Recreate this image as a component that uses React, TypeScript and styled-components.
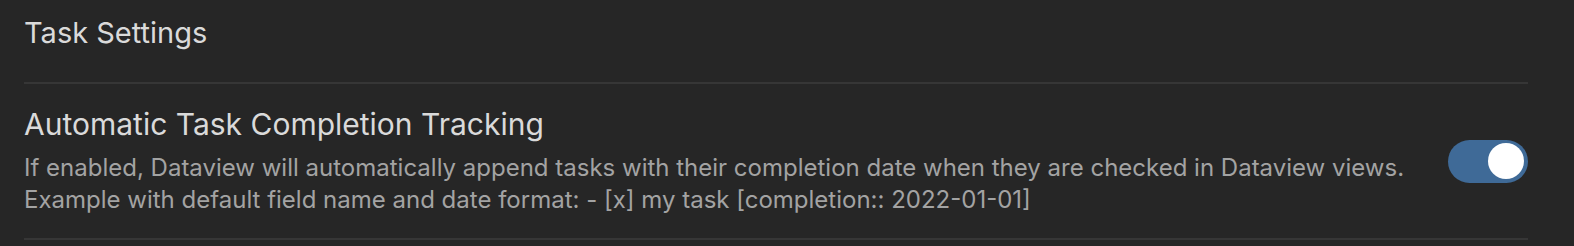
import React from "react";
import styled, { createGlobalStyle } from "styled-components";

const Global = createGlobalStyle`
  html, body { margin: 0; padding: 0; background: #262626; }
  body { font-family: Inter, "Noto Sans", sans-serif; -webkit-font-smoothing: antialiased; }
`;

const Page = styled.div`
  width: 1574px;
  height: 246px;
  box-sizing: border-box;
  padding: 0 46px 0 24px;
  background: #262626;
  overflow: hidden;
`;

const Heading = styled.div`
  font-size: 29px;
  font-weight: 400;
  color: #dadada;
  line-height: 36px;
  padding: 15px 0 31px;
  border-bottom: 2px solid #363636;
`;

const Item = styled.div`
  display: flex;
  align-items: center;
  gap: 40px;
  padding: 22px 0 22px;
  border-bottom: 2px solid #363636;
`;

const Info = styled.div`
  flex: 1;
  min-width: 0;
`;

const Name = styled.div`
  font-size: 30px;
  color: #dadada;
  line-height: 36px;
  margin-bottom: 10px;
`;

const Desc = styled.div`
  font-size: 24px;
  color: #a3a3a3;
  line-height: 32px;
`;

const Toggle = styled.div<{ $on: boolean }>`
  position: relative;
  flex: none;
  width: 80px;
  height: 43px;
  border-radius: 22px;
  background: ${(p) => (p.$on ? "#3f6a97" : "#444")};
`;

const Knob = styled.div<{ $on: boolean }>`
  position: absolute;
  top: 3.5px;
  left: ${(p) => (p.$on ? "40px" : "4px")};
  width: 36px;
  height: 36px;
  border-radius: 50%;
  background: #fff;
`;

export default function App() {
  return (
    <>
      <Global />
      <Page>
        <Heading>Task Settings</Heading>
        <Item>
          <Info>
            <Name>Automatic Task Completion Tracking</Name>
            <Desc>
              If enabled, Dataview will automatically append tasks with their completion date when they are checked in Dataview views.
              <br />
              Example with default field name and date format: - [x] my task [completion:: 2022-01-01]
            </Desc>
          </Info>
          <Toggle $on>
            <Knob $on />
          </Toggle>
        </Item>
      </Page>
    </>
  );
}
